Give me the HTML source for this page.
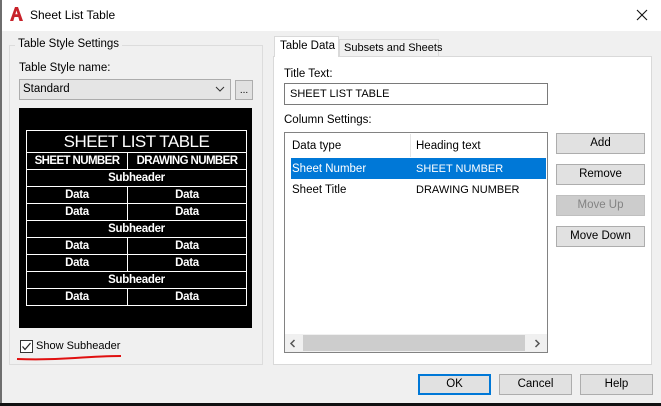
<!DOCTYPE html>
<html><head><meta charset="utf-8"><style>
*{margin:0;padding:0;box-sizing:border-box}
body{width:661px;height:406px;position:relative;overflow:hidden;background:#f0f0f0;font-family:"Liberation Sans",sans-serif;font-size:11.5px;color:#000}
.a{position:absolute}
.btn{position:absolute;background:#e1e1e1;border:1px solid #adadad;text-align:center;font-size:11.5px}
.t{position:absolute;white-space:nowrap}
.pv{position:absolute;border:1px solid #fff;color:#fff;font-weight:bold;text-align:center;font-size:11.5px;line-height:16px;letter-spacing:-0.3px}
</style></head><body>
<div class="a" style="left:0;top:0;width:661px;height:31px;background:#fff"></div>
<div class="a" style="left:0;top:0;width:2px;height:406px;background:#6e6e6e"></div>
<svg class="a" style="left:9px;top:6px" width="15" height="16" viewBox="0 0 15 16"><path d="M1 15 L6 1 L9 1 L14 15 L10.5 15 L9.3 11 L5.5 11 L4.3 15Z M6.3 8.3 L8.6 8.3 L7.5 4.5Z" fill="#c8222a" fill-rule="evenodd"/></svg>
<div class="t" style="left:30px;top:8px;font-size:12px">Sheet List Table</div>
<svg class="a" style="left:636px;top:9px" width="12" height="12"><path d="M1 1L11 11M11 1L1 11" stroke="#111" stroke-width="1.1"/></svg>

<div class="a" style="left:9px;top:45px;width:254px;height:320px;border:1px solid #dcdcdc"></div>
<div class="t" style="left:15px;top:38px;background:#f0f0f0;padding:0 3px">Table Style Settings</div>
<div class="t" style="left:19px;top:62px">Table Style name:</div>
<div class="a" style="left:19px;top:79px;width:212px;height:21px;background:#e5e5e5;border:1px solid #acacac"></div>
<div class="t" style="left:23px;top:83px">Standard</div>
<svg class="a" style="left:215px;top:86px" width="10" height="7"><path d="M1 1L5 5L9 1" stroke="#333" fill="none"/></svg>
<div class="btn" style="left:235px;top:80px;width:18px;height:20px;line-height:20px;font-size:10px">...</div>

<div class="a" style="left:19px;top:108px;width:233px;height:220px;background:#000"></div>
<div class="pv" style="left:26px;top:130px;width:221px;height:23px;font-size:17px;line-height:21px;font-weight:normal;letter-spacing:-0.5px">SHEET LIST TABLE</div>
<div class="pv" style="left:26px;top:152px;width:102px;height:18px;font-size:11.5px;letter-spacing:-0.6px">SHEET NUMBER</div>
<div class="pv" style="left:127px;top:152px;width:120px;height:18px;font-size:11.5px;letter-spacing:-0.6px">DRAWING NUMBER</div>
<div class="pv" style="left:26px;top:169px;width:221px;height:18px">Subheader</div>
<div class="pv" style="left:26px;top:186px;width:102px;height:18px">Data</div><div class="pv" style="left:127px;top:186px;width:120px;height:18px">Data</div>
<div class="pv" style="left:26px;top:203px;width:102px;height:18px">Data</div><div class="pv" style="left:127px;top:203px;width:120px;height:18px">Data</div>
<div class="pv" style="left:26px;top:220px;width:221px;height:18px">Subheader</div>
<div class="pv" style="left:26px;top:237px;width:102px;height:18px">Data</div><div class="pv" style="left:127px;top:237px;width:120px;height:18px">Data</div>
<div class="pv" style="left:26px;top:254px;width:102px;height:18px">Data</div><div class="pv" style="left:127px;top:254px;width:120px;height:18px">Data</div>
<div class="pv" style="left:26px;top:271px;width:221px;height:18px">Subheader</div>
<div class="pv" style="left:26px;top:288px;width:102px;height:18px">Data</div><div class="pv" style="left:127px;top:288px;width:120px;height:18px">Data</div>

<div class="a" style="left:20px;top:340px;width:13px;height:13px;border:1px solid #333;background:#fff"></div>
<svg class="a" style="left:20px;top:340px" width="13" height="13"><path d="M2.5 6.5L5 9.5L10.5 3" stroke="#222" fill="none" stroke-width="1.2"/></svg>
<div class="t" style="left:36px;top:340px;font-size:11px">Show Subheader</div>
<svg class="a" style="left:15px;top:354px" width="110" height="8"><path d="M2 5 Q30 6 60 4 T106 2" stroke="#e01010" stroke-width="2" fill="none"/></svg>

<div class="a" style="left:273px;top:56px;width:379px;height:309px;background:#fff;border:1px solid #d9d9d9"></div>
<div class="a" style="left:339px;top:39px;width:100px;height:18px;background:#f0f0f0;border:1px solid #d9d9d9"></div>
<div class="t" style="left:344px;top:42px;font-size:11px">Subsets and Sheets</div>
<div class="a" style="left:274px;top:36px;width:65px;height:21px;background:#fff;border:1px solid #d9d9d9;border-bottom:none"></div>
<div class="t" style="left:280px;top:40px">Table Data</div>
<div class="t" style="left:284px;top:68px">Title Text:</div>
<div class="a" style="left:284px;top:83px;width:264px;height:22px;border:1px solid #7a7a7a"></div>
<div class="t" style="left:290px;top:88px;font-size:11px">SHEET LIST TABLE</div>
<div class="t" style="left:284px;top:114px">Column Settings:</div>
<div class="a" style="left:284px;top:132px;width:264px;height:221px;border:1px solid #828282"></div>
<div class="a" style="left:410px;top:134px;width:1px;height:23px;background:#e5e5e5"></div>
<div class="t" style="left:292px;top:140px">Data type</div>
<div class="t" style="left:416px;top:140px">Heading text</div>
<div class="a" style="left:291px;top:158px;width:255px;height:21px;background:#0078d7"></div>
<div class="t" style="left:292px;top:163px;color:#fff">Sheet Number</div>
<div class="t" style="left:416px;top:163px;color:#fff;font-size:11px">SHEET NUMBER</div>
<div class="t" style="left:292px;top:184px">Sheet Title</div>
<div class="t" style="left:416px;top:184px;font-size:11px">DRAWING NUMBER</div>
<div class="a" style="left:285px;top:334px;width:262px;height:18px;background:#f0f0f0"></div>
<div class="a" style="left:303px;top:335px;width:222px;height:16px;background:#cdcdcd"></div>
<svg class="a" style="left:289px;top:339px" width="8" height="9"><path d="M5.5 1L2 4.5L5.5 8" stroke="#555" fill="none" stroke-width="1.5"/></svg>
<svg class="a" style="left:533px;top:339px" width="8" height="9"><path d="M2.5 1L6 4.5L2.5 8" stroke="#555" fill="none" stroke-width="1.5"/></svg>

<div class="btn" style="left:556px;top:133px;width:89px;height:21px;line-height:19px">Add</div>
<div class="btn" style="left:556px;top:164px;width:89px;height:21px;line-height:19px">Remove</div>
<div class="btn" style="left:556px;top:195px;width:89px;height:21px;line-height:19px;background:#cccccc;border-color:#bfbfbf;color:#838383">Move Up</div>
<div class="btn" style="left:556px;top:226px;width:89px;height:21px;line-height:19px">Move Down</div>

<div class="btn" style="left:418px;top:374px;width:73px;height:21px;line-height:17px;border:2px solid #0078d7">OK</div>
<div class="btn" style="left:499px;top:374px;width:73px;height:21px;line-height:19px">Cancel</div>
<div class="btn" style="left:580px;top:374px;width:73px;height:21px;line-height:19px">Help</div>
<div class="a" style="left:0;top:403px;width:661px;height:3px;background:#111"></div>
</body></html>
